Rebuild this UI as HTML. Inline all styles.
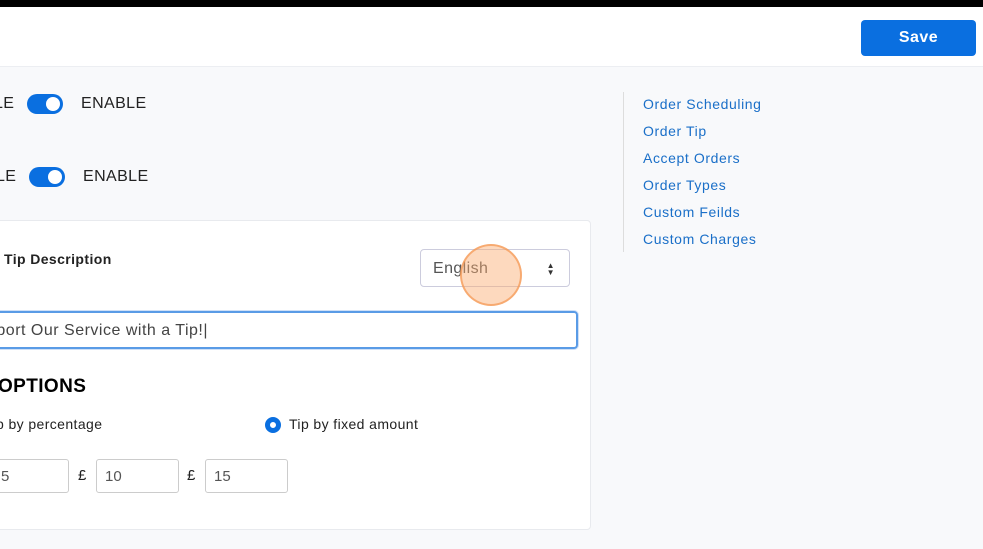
<!DOCTYPE html>
<html><head><style>
*{box-sizing:border-box;margin:0;padding:0}
body{width:983px;height:549px;overflow:hidden;background:#f8f9fb;font-family:"Liberation Sans",sans-serif;position:relative;color:#222}
.top{position:absolute;left:0;top:0;width:983px;height:7px;background:#000}
.hdr{position:absolute;left:0;top:7px;width:983px;height:60px;background:#fff;border-bottom:1px solid #eceef2}
.save{position:absolute;left:861px;top:20px;width:115px;height:36px;background:#0a6fe0;border-radius:4px;color:#fff;font-weight:bold;font-size:16px;text-align:center;line-height:36px;letter-spacing:0.5px}
.t{position:absolute;font-size:16px;letter-spacing:0.4px}
.tog{position:absolute;width:36px;height:20px;border-radius:10px;background:#0a6fe0}
.tog::after{content:"";position:absolute;right:3px;top:3px;width:14px;height:14px;border-radius:50%;background:#fff}
.card{position:absolute;left:-5px;top:220px;width:596px;height:310px;background:#fff;border:1px solid #e8eaee;border-radius:4px}
.sel{position:absolute;left:420px;top:249px;width:150px;height:38px;border:1px solid #ccd;border-radius:4px;background:#fff;font-size:16px;color:#555;padding:10px 12px;letter-spacing:0.4px}
.inp{position:absolute;left:-5px;top:311px;width:583px;height:38px;border:2px solid #5a9be6;border-radius:4px;box-shadow:0 0 0 1px #cfe0f7;font-size:16px;color:#444;padding:9px 0;letter-spacing:0.5px}
.box{position:absolute;top:459px;height:34px;border:1px solid #ccc;border-radius:3px;font-size:15px;color:#555;padding:8px 8px}
.side{position:absolute;left:623px;top:92px;height:160px;border-left:1px solid #ddd}
.lk{position:absolute;left:643px;font-size:14px;color:#1a6fc8;letter-spacing:0.6px}
.circ{position:absolute;left:460px;top:244px;width:62px;height:62px;border-radius:50%;background:rgba(250,170,110,0.45);border:2px solid rgba(245,150,80,0.7)}
</style></head><body>
<div class="top"></div>
<div class="hdr"></div>
<div class="save">Save</div>
<div class="t" style="left:-6px;top:95px">LE</div>
<div class="tog" style="left:27px;top:94px"></div>
<div class="t" style="left:81px;top:95px">ENABLE</div>
<div class="t" style="left:-4px;top:168px">LE</div>
<div class="tog" style="left:29px;top:167px"></div>
<div class="t" style="left:83px;top:168px">ENABLE</div>
<div class="card"></div>
<div class="t" style="left:4px;top:251px;font-size:14px;font-weight:bold">Tip Description</div>
<div class="sel">English<span style="position:absolute;right:14px;top:12px;font-size:8px;color:#333;line-height:7px">▲<br>▼</span></div>
<div class="inp"><span style="margin-left:-10px">pport Our Service with a Tip!</span>|</div>
<div class="t" style="left:-2px;top:376px;font-size:19px;font-weight:bold;color:#000">OPTIONS</div>
<div class="t" style="left:-4px;top:416px;font-size:14px">p by percentage</div>
<div style="position:absolute;left:265px;top:417px;width:16px;height:16px;border-radius:50%;border:5px solid #0a6fe0;background:#fff"></div>
<div class="t" style="left:289px;top:416px;font-size:14px">Tip by fixed amount</div>
<div class="box" style="left:-20px;width:89px;padding-left:20px">5</div>
<div class="t" style="left:78px;top:467px;font-size:15px">£</div>
<div class="box" style="left:96px;width:83px">10</div>
<div class="t" style="left:187px;top:467px;font-size:15px">£</div>
<div class="box" style="left:205px;width:83px">15</div>
<div class="side"></div>
<div class="lk" style="top:96px">Order Scheduling</div>
<div class="lk" style="top:123px">Order Tip</div>
<div class="lk" style="top:150px">Accept Orders</div>
<div class="lk" style="top:177px">Order Types</div>
<div class="lk" style="top:204px">Custom Feilds</div>
<div class="lk" style="top:231px">Custom Charges</div>
<div class="circ"></div>
</body></html>
